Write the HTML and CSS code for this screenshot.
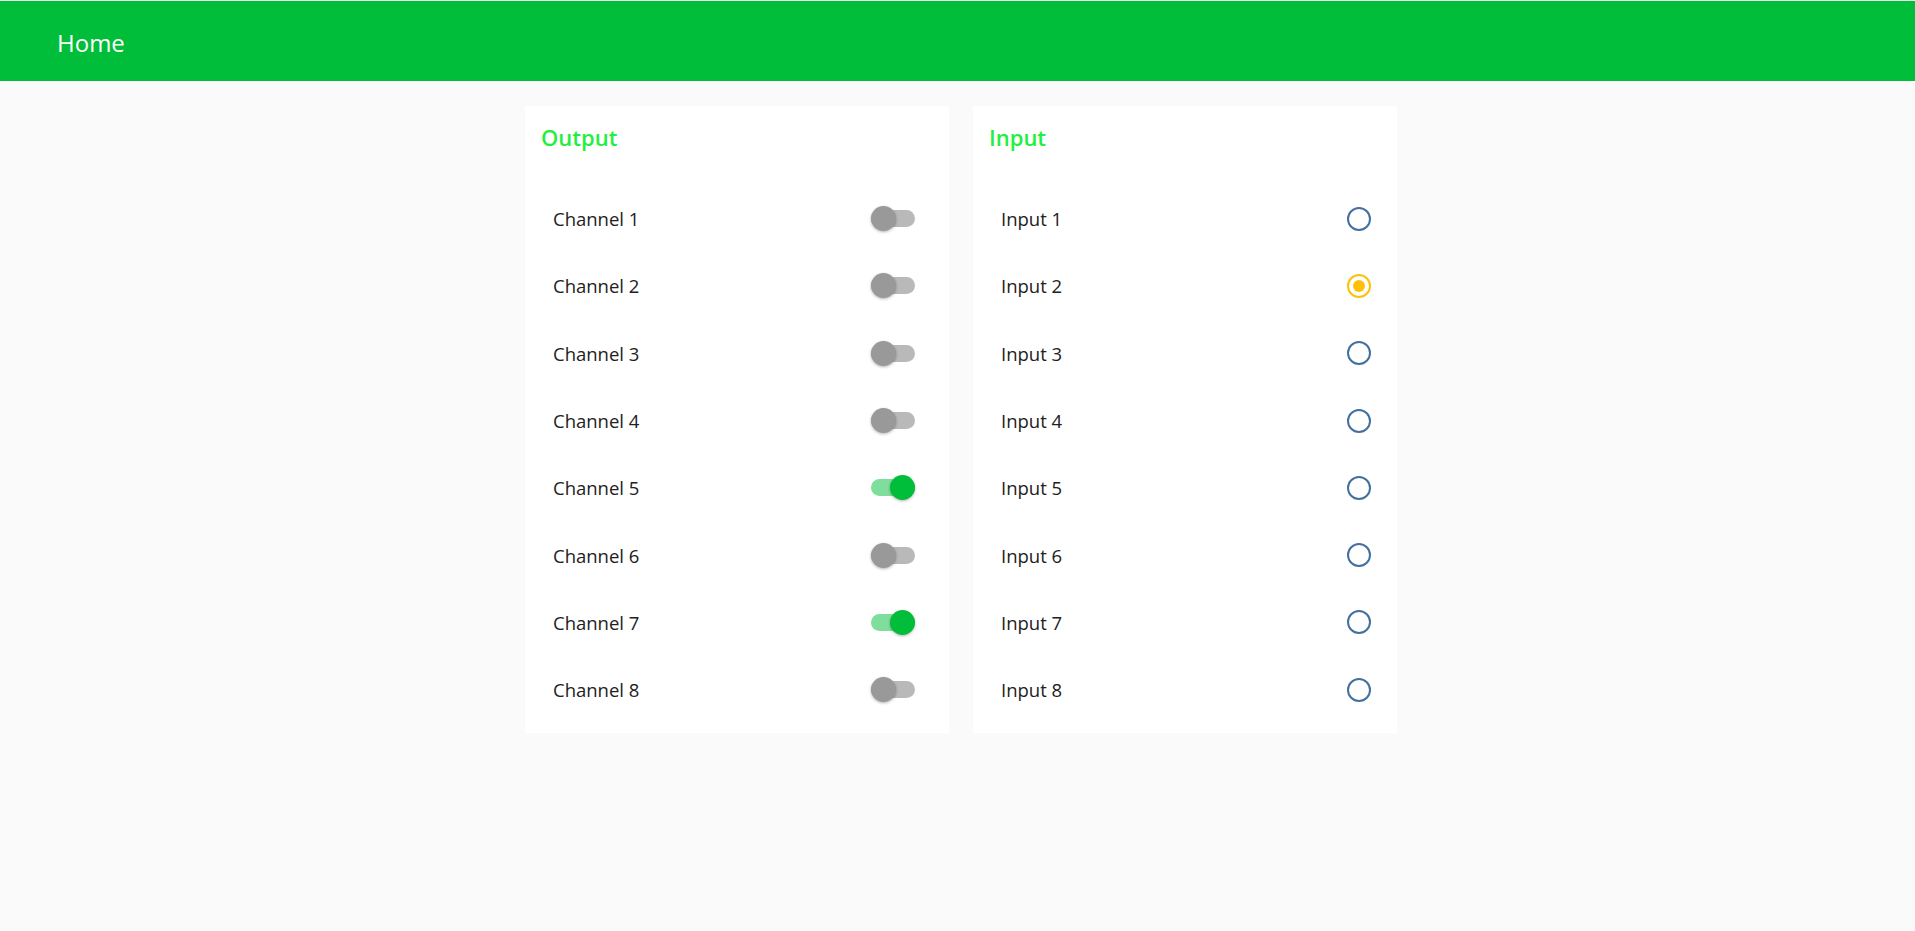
FILE: index.html
```html
<!DOCTYPE html>
<html lang="en">
<head>
    <meta charset="UTF-8">
    <meta name="viewport" content="width=device-width, initial-scale=1.0">
    <title>Home</title>
    <link rel="stylesheet" href="styles.css">
</head>
<body>

<header class="topbar">
    <span class="topbar-title">Home</span>
</header>

<main class="panels">
    <!-- Output channels -->
    <section class="card">
        <h2 class="card-title">Output</h2>
        <div class="row"><span>Channel 1</span><label class="switch"><input type="checkbox"><span class="track"></span><span class="thumb"></span></label></div>
        <div class="row"><span>Channel 2</span><label class="switch"><input type="checkbox"><span class="track"></span><span class="thumb"></span></label></div>
        <div class="row"><span>Channel 3</span><label class="switch"><input type="checkbox"><span class="track"></span><span class="thumb"></span></label></div>
        <div class="row"><span>Channel 4</span><label class="switch"><input type="checkbox"><span class="track"></span><span class="thumb"></span></label></div>
        <div class="row"><span>Channel 5</span><label class="switch"><input type="checkbox" checked><span class="track"></span><span class="thumb"></span></label></div>
        <div class="row"><span>Channel 6</span><label class="switch"><input type="checkbox"><span class="track"></span><span class="thumb"></span></label></div>
        <div class="row"><span>Channel 7</span><label class="switch"><input type="checkbox" checked><span class="track"></span><span class="thumb"></span></label></div>
        <div class="row"><span>Channel 8</span><label class="switch"><input type="checkbox"><span class="track"></span><span class="thumb"></span></label></div>
    </section>

    <!-- Inputs -->
    <section class="card">
        <h2 class="card-title">Input</h2>
        <div class="row"><span>Input 1</span><span class="radio"></span></div>
        <div class="row"><span>Input 2</span><span class="radio active"></span></div>
        <div class="row"><span>Input 3</span><span class="radio"></span></div>
        <div class="row"><span>Input 4</span><span class="radio"></span></div>
        <div class="row"><span>Input 5</span><span class="radio"></span></div>
        <div class="row"><span>Input 6</span><span class="radio"></span></div>
        <div class="row"><span>Input 7</span><span class="radio"></span></div>
        <div class="row"><span>Input 8</span><span class="radio"></span></div>
    </section>
</main>

</body>
</html>
```

FILE: styles.css
```css
body {
    margin: 0;
    padding: 0;
    font-family: "Open Sans", "Noto Sans", sans-serif;
    background-color: #fafafa;
    color: #212121;
}
.topbar {
    height: 81px;
    background-color: #00be39;
    border-top: 1px solid #e8f8ec;
    box-sizing: border-box;
    display: flex;
    align-items: center;
    padding-left: 57px;
    padding-top: 3px;
}
.topbar-title {
    color: #fff;
    font-size: 24px;
}
.panels {
    display: flex;
    justify-content: center;
    gap: 24px;
    padding-top: 25px;
    padding-left: 7px;
}
.card {
    width: 424px;
    box-sizing: border-box;
    background-color: #fff;
    padding: 16px 0 10px 0;
}
.card-title {
    margin: 0 0 33px 16px;
    font-size: 22px;
    line-height: 30px;
    font-weight: 600;
    color: #1ff03f;
}
.row {
    height: 67.3px;
    display: flex;
    align-items: center;
    justify-content: space-between;
    padding: 0 26px 0 28px;
    font-size: 18.5px;
}
.switch {
    position: relative;
    width: 44px;
    height: 25px;
    margin-right: 8px;
    cursor: pointer;
}
.switch input {
    display: none;
}
.switch .track {
    position: absolute;
    left: 0;
    top: 4px;
    width: 44px;
    height: 17px;
    border-radius: 9px;
    background-color: #b9b9b9;
}
.switch .thumb {
    position: absolute;
    left: 0;
    top: 0;
    width: 25px;
    height: 25px;
    border-radius: 50%;
    background-color: #999;
    box-shadow: 0 1px 3px rgba(0, 0, 0, 0.3);
}
.switch input:checked ~ .track {
    background-color: #80de9c;
}
.switch input:checked ~ .thumb {
    left: 19px;
    background-color: #00be39;
}
.radio {
    width: 24px;
    height: 24px;
    box-sizing: border-box;
    border: 2.5px solid #43709f;
    border-radius: 50%;
    display: flex;
    align-items: center;
    justify-content: center;
}
.radio.active {
    border-color: #ffc107;
}
.radio.active::after {
    content: "";
    width: 12px;
    height: 12px;
    border-radius: 50%;
    background-color: #ffc107;
}
```
